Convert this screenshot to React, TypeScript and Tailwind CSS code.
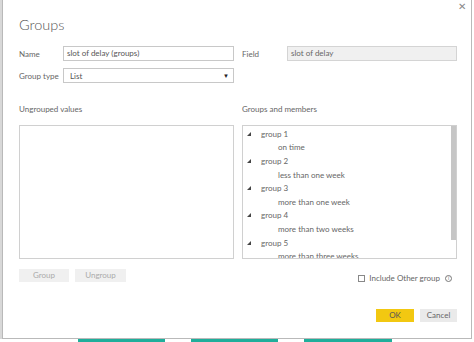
const groups = [
  { name: "group 1", member: "on time" },
  { name: "group 2", member: "less than one week" },
  { name: "group 3", member: "more than one week" },
  { name: "group 4", member: "more than two weeks" },
  { name: "group 5", member: "more than three weeks" },
];

function Expanded() {
  return (
    <svg width="4" height="4" viewBox="0 0 4 4" className="shrink-0">
      <path d="M4 0 L4 4 L0 4 Z" fill="#444" />
    </svg>
  );
}

export default function App() {
  return (
    <div className="w-[474px] h-[342px] overflow-hidden bg-white text-[8px] text-[#666] whitespace-nowrap" style={{ fontFamily: 'Lato, sans-serif' }}>
      <div className="flex h-[339px]">
        <div className="w-[2px] bg-[#d8d8d8]" />
        <div className="relative w-[470px] border-l border-r border-b border-[#b9b9b9] bg-white pl-[16px] pr-[14px]">
          <button className="absolute right-[5px] top-[1px] text-[10px] leading-none text-[#888]">✕</button>

          <h1 className="pt-[15px] h-[40px] text-[14.5px] font-light leading-[20px] text-[#555]">Groups</h1>

          <div className="mt-[6px] grid grid-cols-2 gap-x-[8px]">
            <div className="flex items-center">
              <span className="w-[44px]">Name</span>
              <div className="flex-1 h-[15px] border border-[#c8c8c8] px-[3px] leading-[13px] text-[#555]">slot of delay (groups)</div>
            </div>
            <div className="flex items-center">
              <span className="w-[45px]">Field</span>
              <div className="flex-1 h-[15px] border border-[#d4d4d4] bg-[#f0f0f0] px-[3px] leading-[13px] text-[#666]">slot of delay</div>
            </div>
            <div className="mt-[7px] flex items-center">
              <span className="w-[44px]">Group type</span>
              <div className="flex-1 h-[15px] border border-[#c8c8c8] pl-[6px] pr-[4px] flex items-center justify-between text-[#555]">
                <span>List</span>
                <span className="text-[6px] text-[#222]">▼</span>
              </div>
            </div>
          </div>

          <div className="mt-[19px] grid grid-cols-2 gap-x-[8px]">
            <div>
              <div className="h-[14px] leading-[14px]">Ungrouped values</div>
              <div className="mt-[9px] h-[134px] border border-[#d0d0d0]" />
              <div className="mt-[10px] flex gap-[6px]">
                <button className="w-[50px] h-[13px] bg-[#f0f0f0] text-[#aaa] leading-[13px]">Group</button>
                <button className="w-[51px] h-[13px] bg-[#f0f0f0] text-[#aaa] leading-[13px]">Ungroup</button>
              </div>
            </div>
            <div>
              <div className="h-[14px] leading-[14px]">Groups and members</div>
              <div className="mt-[9px] h-[134px] border border-[#d0d0d0] flex overflow-hidden">
                <div className="flex-1 pt-[1px]">
                  {groups.map((g) => (
                    <div key={g.name}>
                      <div className="h-[13.6px] flex items-center pl-[4px]">
                        <Expanded />
                        <span className="ml-[10px]">{g.name}</span>
                      </div>
                      <div className="h-[13.6px] flex items-center pl-[35px]">{g.member}</div>
                    </div>
                  ))}
                </div>
                <div className="w-[5px] h-[114px] bg-[#c6c6c6]" />
              </div>
              <div className="mt-[13px] flex items-center justify-end pr-[5px]">
                <span className="w-[7px] h-[7px] border border-[#888] bg-white" />
                <span className="ml-[4px]">Include Other group</span>
                <span className="ml-[5px] w-[7px] h-[7px] rounded-full border border-[#777] text-[5px] leading-[5px] text-center text-[#777]">i</span>
              </div>
            </div>
          </div>

          <div className="mt-[25px] flex justify-end gap-[6px]">
            <button className="w-[38px] h-[13px] bg-[#f2c811] text-[#555] leading-[13px]">OK</button>
            <button className="w-[37px] h-[13px] bg-[#eaeaea] text-[#666] leading-[13px]">Cancel</button>
          </div>
        </div>
        <div className="flex-1 bg-white" />
      </div>
      <div className="flex h-[3px] pl-[78px] gap-[26px]">
        <div className="w-[87px] bg-[#1fae9b]" />
        <div className="w-[87px] bg-[#1fae9b]" />
        <div className="w-[88px] bg-[#1fae9b]" />
      </div>
    </div>
  );
}
